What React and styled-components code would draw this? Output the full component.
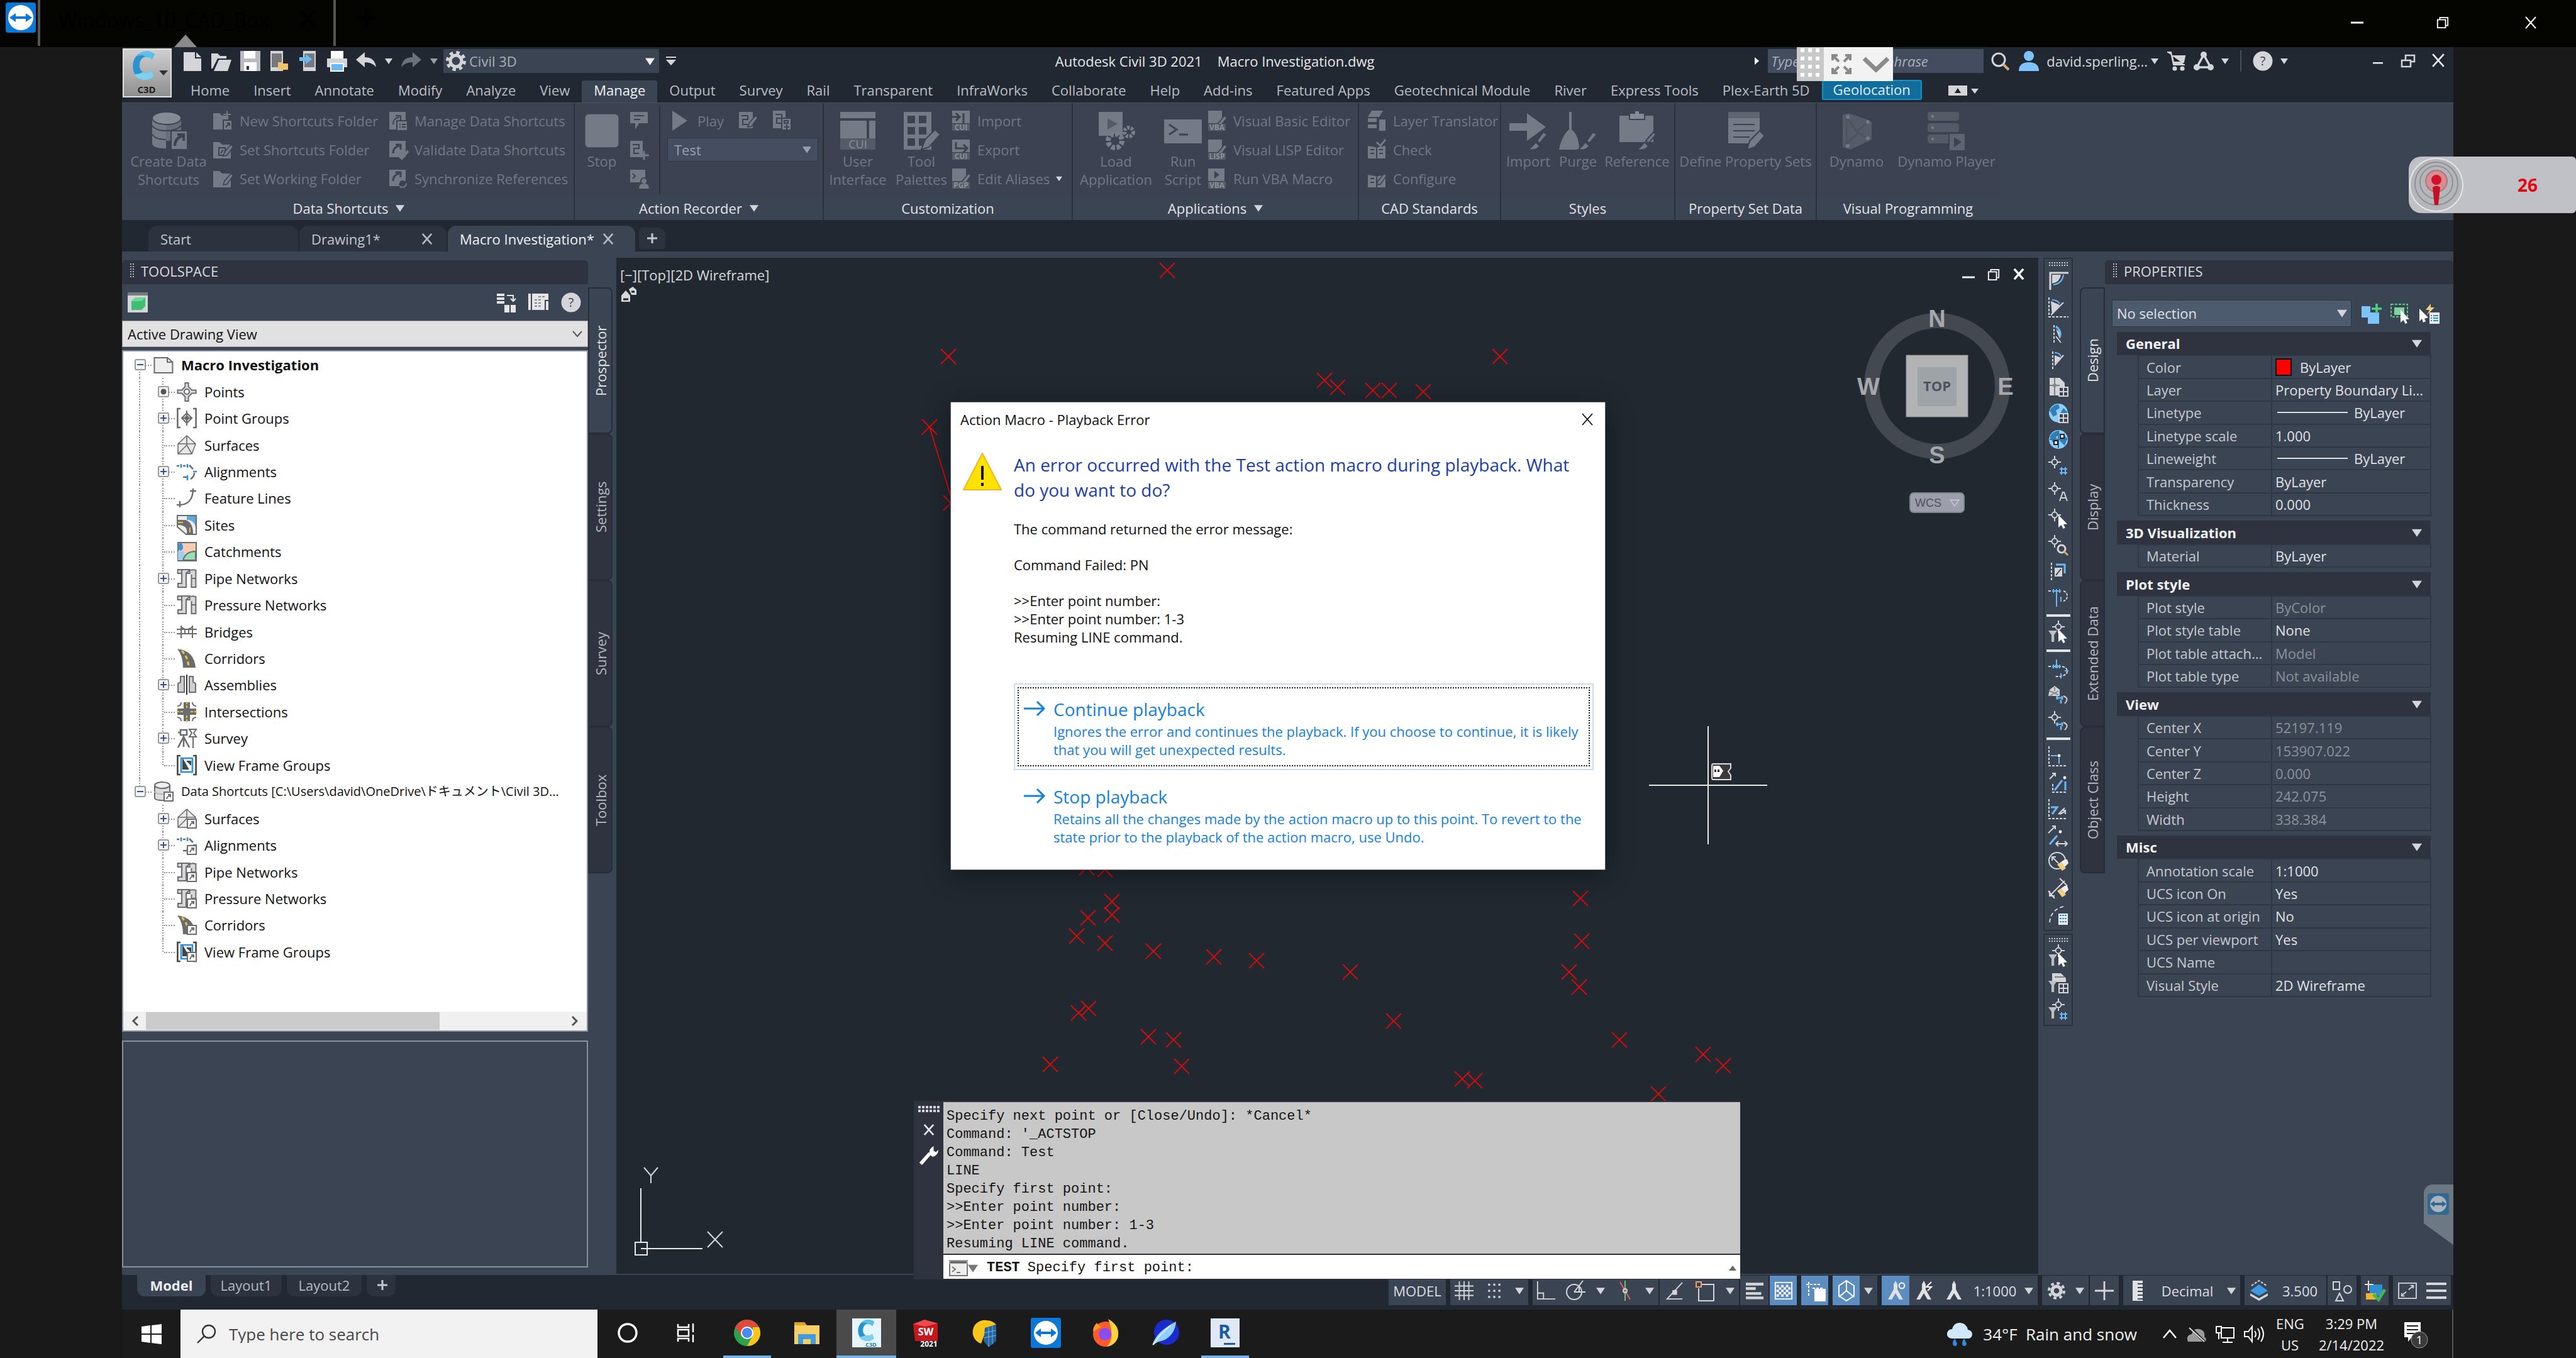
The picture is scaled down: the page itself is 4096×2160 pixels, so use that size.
import React from 'react';
import styled, { createGlobalStyle } from 'styled-components';

const GlobalStyle = createGlobalStyle`
    *{ box-sizing:border-box; }
    body{
        margin:0;
        background:#191919;
        color:#d6d8dc;
        font-family:"Open Sans", "Noto Sans", "Noto Sans CJK JP", sans-serif;
        font-size:22px;
        line-height:28px;
    }
    button, input, select{
        font:inherit;
        color:inherit;
        margin:0;
        padding:0;
        border:0;
        background:none;
        border-radius:0;
    }
    select{ appearance:none; }
    a{ color:inherit; text-decoration:none; }
    svg{ display:block; flex:none; overflow:visible; }
    p, h2{ margin:0; font-weight:400; }
`;

const G = '#d4d5d8';
const B = '#6cb8f4';
const K = '#6a6c70';
const D = '#747a86';
const D2 = '#3c4252';

/* ---------- page shell ---------- */

const Page = styled.div`
    position:relative;
    min-height:100vh;
    display:flex;
    flex-direction:column;
    overflow:hidden;
`;
const Shell = styled.div`
    flex:1;
    margin:0 195px 0 194px;
    display:flex;
    flex-direction:column;
    background:#3b4453;
`;
const RemoteBar = styled.header`
    height:75px;
    background:#040500;
    display:flex;
    align-items:flex-start;
    padding-left:9px;
    > svg{ margin-top:4px; }
`;
const RemoteTab = styled.div`
    position:relative;
    width:474px;
    height:73px;
    margin-left:3px;
    padding:14px 28px 0 29px;
    border:solid #55564f;
    border-width:0 4px;
    display:flex;
    justify-content:space-between;
    align-items:flex-start;
    font-size:32px;
    line-height:36px;
    color:#000;
    &::after{
        content:"";
        position:absolute;
        left:213px;
        bottom:-2px;
        border:solid transparent;
        border-width:0 18px 20px;
        border-bottom-color:#8a8a8a;
    }
`;
const RemoteAdd = styled.button`
    margin:13px 0 0 34px;
`;
const RemoteWin = styled.div`
    margin-left:auto;
    height:72px;
    display:flex;
    button{
        width:136px;
        display:flex;
        justify-content:center;
        align-items:center;
    }
    button:last-child{ width:144px; }
`;

/* ---------- title bar and menu ---------- */

const AppHeader = styled.div`
    height:88px;
    background:#222831;
    display:flex;
`;
const AppButton = styled.button`
    width:78px;
    height:78px;
    margin:2px 0 0 1px;
    border:2px solid #e0e0e0;
    background:linear-gradient(#d0d0d0, #8e8e8e);
`;
const HeaderRows = styled.div`
    flex:1;
    display:flex;
    flex-direction:column;
`;
const QuickRow = styled.div`
    height:44px;
    display:flex;
    align-items:center;
`;
const QuickIcons = styled.div`
    display:flex;
    align-items:center;
    gap:14px;
    padding:0 9px 0 17px;
`;
const IconButton = styled.button`
    display:flex;
    align-items:center;
    justify-content:center;
    width:${props => props.$w ? props.$w + 'px' : 'auto'};
    height:${props => props.$h ? props.$h + 'px' : 'auto'};
`;
const Workspace = styled.label`
    width:343px;
    height:38px;
    padding:0 7px 0 4px;
    background:#3b4453;
    display:flex;
    align-items:center;
    gap:5px;
    color:#a9aeb8;
    select{ flex:1; }
`;
const Title = styled.div`
    flex:1;
    padding-right:10px;
    text-align:center;
    color:#e6e7e9;
    span{ margin:0 12px; }
`;
const Account = styled.div`
    display:flex;
    align-items:center;
    gap:12px;
`;
const UserName = styled.span`
    margin-right:-7px;
`;
const SearchInput = styled.input`
    width:343px;
    height:38px;
    padding:0 5px;
    background:#444c5f;
    font-style:italic;
    &::placeholder{ color:#a9aeb8; opacity:1; }
`;
const Divider = styled.div`
    width:2px;
    height:34px;
    margin:0 6px;
    background:#464d59;
`;
const WinControls = styled.div`
    display:flex;
    margin-left:119px;
    button{
        width:48px;
        display:flex;
        justify-content:center;
    }
`;
const MenuRow = styled.nav`
    height:44px;
    padding-left:11px;
    display:flex;
    align-items:flex-end;
`;
const MenuTab = styled.a`
    height:35px;
    padding:0 19px;
    line-height:30px;
    color:${props => props.$on ? '#f0f1f3' : '#b9bdc4'};
    background:${props => props.$on ? '#3b4453' : 'none'};
    border-radius:4px 4px 0 0;
`;
const GeoTab = styled.a`
    height:32px;
    margin:0 42px 4px 0;
    padding:0 16px;
    line-height:26px;
    color:#e2eef6;
    background:#116d9c;
    border:2px solid #1590c8;
    border-radius:3px;
`;

/* ---------- ribbon ---------- */

const Ribbon = styled.div`
    display:flex;
    height:187px;
    padding-left:3px;
    background:#3b4453;
    border-top:1px solid #4a5260;
`;
const Panel = styled.section`
    width:${props => props.$w}px;
    border-right:2px solid #2a313c;
    display:flex;
    flex-direction:column;
    &:last-child{ border-right:0; }
`;
const PanelBody = styled.div`
    height:148px;
    padding-top:5px;
    display:flex;
    background:#3d4252;
    color:#717784;
`;
const PanelLabel = styled.button`
    flex:1;
    display:flex;
    align-items:center;
    justify-content:center;
    gap:12px;
    color:#e2e3e6;
`;
const BigButton = styled.button`
    width:${props => props.$w}px;
    padding-top:7px;
    display:flex;
    flex-direction:column;
    align-items:center;
    justify-content:flex-start;
    line-height:29px;
    white-space:pre-line;
    text-align:center;
    svg{ margin-bottom:2px; }
`;
const SmallCol = styled.div`
    width:${props => props.$w ? props.$w + 'px' : 'auto'};
    display:flex;
    flex-direction:column;
`;
const SmallButton = styled.button`
    height:46px;
    display:flex;
    align-items:center;
    gap:10px;
    white-space:nowrap;
`;
const PlayCol = styled.div`
    margin:0 0 3px 16px;
    padding-left:11px;
    border-left:2px solid #2a313c;
`;
const PlayRow = styled.div`
    height:46px;
    display:flex;
    align-items:center;
    gap:22px;
    padding-left:6px;
`;
const MacroSelect = styled.label`
    display:flex;
    align-items:center;
    width:240px;
    height:38px;
    margin-top:4px;
    padding:0 10px;
    background:#454d60;
    border:1px solid #2f3643;
    color:#9aa0ac;
    select{ flex:1; }
`;

/* ---------- document tabs ---------- */

const DocTabs = styled.div`
    height:52px;
    padding:9px 0 0 42px;
    display:flex;
    gap:2px;
    background:#222831;
    border-bottom:2px solid #3b4453;
`;
const DocTab = styled.button`
    width:${props => props.$w}px;
    padding:0 ${props => props.$on ? 34 : 22}px 0 19px;
    display:flex;
    align-items:center;
    justify-content:space-between;
    background:${props => props.$on ? '#3b4453' : '#2c333f'};
    color:${props => props.$on ? '#f0f1f3' : '#c3c6cc'};
    border-radius:14px 14px 0 0;
    white-space:nowrap;
`;
const NewDocTab = styled.button`
    width:42px;
    margin:3px 0 4px 4px;
    display:flex;
    align-items:center;
    justify-content:center;
    background:#2c333f;
    border-radius:6px 12px 6px 6px;
`;

/* ---------- work area ---------- */

const Work = styled.main`
    position:relative;
    flex:1;
    display:flex;
    padding-top:8px;
`;
const Toolspace = styled.section`
    width:741px;
    padding-top:4px;
    display:flex;
    flex-direction:column;
`;
const PaletteTitle = styled.div`
    height:38px;
    padding:0 0 5px 12px;
    display:flex;
    align-items:center;
    gap:10px;
    background:#2e333f;
    border-radius:6px 6px 0 0;
    color:#d9dbdf;
`;
const PaletteTools = styled.div`
    height:58px;
    padding:0 11px 0 9px;
    display:flex;
    align-items:center;
    gap:20px;
    button:first-child{ margin-right:auto; }
`;
const ViewSelect = styled.label`
    height:42px;
    padding:0 8px;
    display:flex;
    align-items:center;
    background:#e1e1e1;
    border:1px solid #9a9ea6;
    color:#111;
    select{ flex:1; }
`;
const Tree = styled.div`
    height:1084px;
    margin-top:5px;
    display:flex;
    flex-direction:column;
    background:#fff;
    border:2px solid #8b919c;
    color:#111;
`;
const TreeRows = styled.div`
    flex:1;
    padding:0 0 74px 8px;
    display:flex;
    flex-direction:column;
`;
const TreeRow = styled.div`
    flex:1;
    display:flex;
    align-items:center;
    font-size:${props => props.$long ? 20 : 22}px;
    font-weight:${props => props.$bold ? 700 : 400};
    white-space:nowrap;
    > svg{ margin:0 12px 0 3px; }
`;
const Guide = styled.div`
    position:relative;
    flex:none;
    align-self:stretch;
    width:37px;
    display:flex;
    align-items:center;
    justify-content:center;
    &::before{
        content:"";
        display:${props => props.$line ? 'block' : 'none'};
        position:absolute;
        left:17px;
        top:${props => props.$line === 'start' ? '50%' : 0};
        bottom:${props => props.$line === 'end' ? '50%' : 0};
        border-left:2px dotted #999;
    }
    &::after{
        content:"";
        display:${props => props.$stub ? 'block' : 'none'};
        position:absolute;
        left:20px;
        right:0;
        top:50%;
        border-top:2px dotted #999;
    }
`;
const Toggle = styled.button`
    position:relative;
    z-index:1;
    width:18px;
    height:18px;
    background:#f6f6f6;
    border:2px solid #9a9a9a;
    border-radius:3px;
    svg{ margin:auto; }
`;
const TreeScroll = styled.div`
    height:30px;
    padding:0 11px;
    display:flex;
    align-items:center;
    gap:9px;
    background:#f0f0f0;
    div{
        width:467px;
        height:28px;
        background:#cbcbcb;
    }
    button:last-child{ margin-left:auto; }
`;
const Preview = styled.div`
    flex:1;
    margin:14px 0 10px;
    border:2px solid #8b919c;
`;
const SideTabs = styled.div`
    width:${props => props.$right ? 40 : 39}px;
    margin:47px ${props => props.$right ? 0 : 6}px 0 ${props => props.$right ? 11 : 0}px;
    display:flex;
    flex-direction:column;
`;
const SideTab = styled.button`
    height:233px;
    writing-mode:vertical-rl;
    transform:rotate(180deg);
    line-height:30px;
    text-align:center;
    color:${props => props.$on ? '#e0e2e6' : '#b4b8c0'};
    background:${props => props.$on ? '#3b4453' : '#2e333f'};
    border:2px solid #272d38;
    border-radius:${props => props.$right ? '0 8px 8px 0' : '8px 0 0 8px'};
`;
const Canvas = styled.section`
    position:relative;
    flex:1;
    background:#212830;
    > svg{ position:absolute; inset:0; width:100%; height:100%; }
`;
const CanvasTop = styled.div`
    position:relative;
    height:54px;
    padding:0 11px 0 6px;
    display:flex;
    justify-content:space-between;
    align-items:center;
    color:#d6d8dc;
    div{ display:flex; }
    div button{ width:40px; display:flex; justify-content:center; }
`;
const ViewCube = styled.div`
    position:absolute;
    top:80px;
    right:30px;
    width:262px;
    display:flex;
    flex-direction:column;
    align-items:center;
`;
const WcsButton = styled.button`
    width:88px;
    height:33px;
    margin-top:33px;
    display:flex;
    align-items:center;
    justify-content:space-around;
    font-family:"Liberation Sans", sans-serif;
    font-size:18px;
    color:#4d505c;
    background:#9c9eac;
    border:2px solid #7f828f;
    border-radius:7px;
`;
const ToolStrips = styled.div`
    width:47px;
    margin-left:8px;
    display:flex;
    flex-direction:column;
    gap:4px;
`;
const Strip = styled.div`
    padding:4px 0 3px;
    display:flex;
    flex-direction:column;
    align-items:center;
    border:2px solid #2a313c;
    > svg{ margin-bottom:2px; }
    button{ height:42px; display:flex; align-items:center; }
    hr{
        width:38px;
        height:4px;
        margin:5px 0;
        border:0;
        background:#e3e3e3;
    }
`;
const Properties = styled.section`
    flex:0 0 554px;
    padding-top:4px;
`;
const PropTop = styled.div`
    display:flex;
    align-items:center;
    gap:14px;
    padding:25px 0 8px 11px;
`;
const SelectionBox = styled.label`
    width:381px;
    height:43px;
    margin-right:2px;
    padding:0 6px 2px 7px;
    display:flex;
    align-items:center;
    background:#4d5b6f;
    border:1px solid #2f3643;
    color:#e0e2e6;
    select{ flex:1; }
`;
const PropTable = styled.table`
    width:500px;
    height:1058px;
    margin-left:19px;
    border-collapse:collapse;
    table-layout:fixed;
    th{
        height:37px;
        padding:0 14px;
        text-align:left;
        color:#f2f3f5;
        background:#2e333f;
    }
    th div{ display:flex; justify-content:space-between; align-items:center; }
    td{
        height:36px;
        padding:0 0 0 5px;
        line-height:28px;
        border:2px solid #2f3744;
        white-space:nowrap;
        overflow:hidden;
    }
    td:first-child{ border:0; }
    td:nth-child(2){ padding-left:12px; color:#c6c9cf; }
    .gap td{ height:8px; border:0; }
`;
const Col = styled.col`
    width:${props => props.$w}px;
`;
const Value = styled.td`
    color:${props => props.$dim ? '#8b919b' : '#e0e2e6'};
    div{ display:flex; align-items:center; gap:${props => props.$swatch ? 13 : 10}px; }
`;
const Swatch = styled.span`
    width:26px;
    height:28px;
    background:#fe0000;
    border:2px solid #101010;
`;
const Stroke = styled.span`
    width:112px;
    height:2px;
    margin-left:3px;
    background:#d9dbdf;
`;

/* ---------- command line ---------- */

const CommandWindow = styled.div`
    position:absolute;
    left:1259px;
    bottom:-9px;
    width:1314px;
    display:flex;
    background:#2e333f;
    z-index:1;
`;
const CommandGrip = styled.div`
    width:47px;
    padding-top:8px;
    display:flex;
    flex-direction:column;
    align-items:center;
    gap:17px;
`;
const CommandMain = styled.div`
    flex:1;
    margin:2px 0 1px;
    font-family:"Liberation Mono", "DejaVu Sans Mono", monospace;
    color:#151515;
`;
const History = styled.div`
    height:241px;
    padding:8px 5px 0;
    background:#c8c8c8;
    line-height:29px;
    white-space:pre;
`;
const CommandInput = styled.label`
    height:38px;
    margin-top:2px;
    padding:3px 6px 0 9px;
    display:flex;
    align-items:center;
    background:#fff;
    b{ margin:0 12px 0 14px; }
    input{ flex:1; }
`;

/* ---------- bottom bars ---------- */

const StatusRow = styled.div`
    height:57px;
    padding:0 4px 0 24px;
    display:flex;
    background:#222831;
    border-top:2px solid #3b4453;
`;
const LayoutTab = styled.button`
    height:34px;
    width:${props => props.$w}px;
    margin-right:8px;
    padding-bottom:3px;
    font-weight:${props => props.$on ? 700 : 400};
    color:${props => props.$on ? '#eceef0' : '#b4b8c0'};
    background:${props => props.$on ? '#3b4453' : '#2c333f'};
    border-radius:0 0 12px 12px;
`;
const StatusTools = styled.div`
    margin-left:auto;
    display:flex;
    align-items:flex-start;
    padding-top:1px;
`;
const StatusGroup = styled.div`
    display:flex;
    height:47px;
    margin-left:${props => props.$tight ? 2 : 7}px;
    background:#3b4453;
`;
const StatusItem = styled.button`
    width:${props => props.$w}px;
    height:47px;
    display:flex;
    align-items:center;
    justify-content:center;
    white-space:nowrap;
    color:#dcdee2;
    background:${props => props.$on ? '#5c8dc0' : 'none'};
`;
const Taskbar = styled.footer`
    height:77px;
    margin:0 195px 0 194px;
    display:flex;
    background:#1b1b1b;
    border-right:2px solid #555;
    color:#f0f0f0;
`;
const StartButton = styled.button`
    width:93px;
    display:flex;
    align-items:center;
    justify-content:center;
`;
const TaskSearch = styled.label`
    width:663px;
    padding-left:25px;
    display:flex;
    align-items:center;
    gap:20px;
    background:#f2f2f2;
    input{ flex:1; font-size:26px; }
    input::placeholder{ color:#484848; opacity:1; }
`;
const TaskItem = styled.button`
    width:95px;
    display:flex;
    flex-direction:column;
    align-items:center;
    justify-content:space-between;
    padding-top:13px;
    background:${props => props.$on ? '#4a4a4a' : 'none'};
    &::after{
        content:"";
        width:${props => props.$on ? '100%' : '76px'};
        height:4px;
        background:${props => props.$open ? '#74b4e8' : 'none'};
    }
`;
const Tray = styled.div`
    margin-left:auto;
    padding-right:38px;
    display:flex;
    align-items:center;
`;
const Weather = styled.span`
    margin:0 34px 0 16px;
    font-size:26px;
    line-height:36px;
    white-space:pre;
`;
const TrayIcons = styled.div`
    display:flex;
    gap:13px;
    margin-right:20px;
`;
const TrayText = styled.div`
    width:${props => props.$w}px;
    line-height:34px;
    text-align:center;
`;

/* ---------- floating windows ---------- */

const RemotePanel = styled.div`
    position:absolute;
    top:75px;
    right:1086px;
    height:54px;
    display:flex;
    background:#f2f2f2;
    button{ width:55px; display:flex; align-items:center; justify-content:center; }
`;
const Recorder = styled.div`
    position:absolute;
    top:249px;
    right:0;
    width:266px;
    height:90px;
    padding-right:61px;
    display:flex;
    align-items:center;
    justify-content:space-between;
    background:#c0c1c6;
    border-radius:20px 6px 6px 20px;
    color:#e30613;
    font-size:28px;
    font-weight:700;
`;
const RemoteDock = styled.button`
    position:absolute;
    top:1884px;
    right:195px;
`;
const Dialog = styled.div`
    position:absolute;
    left:1511px;
    top:639px;
    width:1042px;
    min-height:745px;
    padding:13px 18px 18px 15px;
    background:#fff;
    border:1px solid #5a5d62;
    box-shadow:0 8px 40px rgba(0,0,0,.4);
    color:#111;
    z-index:2;
`;
const DialogTitle = styled.div`
    display:flex;
    justify-content:space-between;
    align-items:center;
    margin-bottom:38px;
`;
const DialogHead = styled.div`
    display:flex;
    gap:19px;
    padding-left:4px;
    h2{
        font-size:28px;
        line-height:40px;
        color:#1c3fa6;
    }
`;
const DialogBody = styled.div`
    padding-left:85px;
`;
const Message = styled.p`
    padding-top:28px;
    line-height:29px;
    white-space:pre-line;
`;
const Choice = styled.button`
    display:flex;
    align-items:flex-start;
    width:100%;
    min-height:138px;
    margin-top:${props => props.$focus ? 59 : 1}px;
    padding:4px;
    border:2px solid ${props => props.$focus ? '#c5e0f5' : 'transparent'};
    text-align:left;
    color:#1681da;
    > span{
        flex:1;
        display:flex;
        gap:12px;
        min-height:126px;
        padding:12px 0 0 7px;
        border:2px dotted ${props => props.$focus ? '#222' : 'transparent'};
    }
    b{ display:block; font-weight:400; font-size:28px; line-height:42px; }
    small{ display:block; font-size:22px; line-height:29px; }
`;

/* ---------- icons ---------- */

const Svg = ({ s = 32, h, vb = '0 0 16 16', c = 'none', st = G, children }) => (
    <svg width={s} height={h || s} viewBox={vb} fill={c} stroke={st} strokeWidth="1" aria-hidden="true">{children}</svg>
);
const Down = ({ c = G, s = 12 }) => <Svg s={s} vb="0 0 12 12" st="none" c={c}><path d="M0 2h12l-6 9z" /></Svg>;
const Cross = ({ s = 20, c = '#e8e8e8', w = 1.5 }) => <Svg s={s} vb="0 0 20 20"><path d="M2 1l16 18M18 1L2 19" stroke={c} strokeWidth={w} /></Svg>;

// parts shared by several of the 16 px drawings
const Pt = ({ c = G }) => <><circle cx="5" cy="5" r="2.2" stroke={c} /><path d="M5 0v3M5 7v3M0 5h3M7 5h3" stroke={c} /></>;
const Cursor = () => <path d="M8 5v10l2.3-2 1.5 3 1.6-.8-1.4-2.7 3-.3z" fill="#fff" stroke="none" />;
const Funnel = () => <path d="M0 6h7L4.600 9.500V15H2.500V9.500z" fill="#bdbfc3" stroke="none" />;
const Sheet = () => <path d="M8.500 8.500h7v7h-7zM8.500 12h7M12 8.500v7" fill="#3b4453" stroke={G} />;
const Link = () => <><rect x="8.500" y="8.500" width="7" height="7" fill="#fff" stroke={K} /><path d="M10.500 14c.5-2 1-2.500 2.500-2.500M11.500 10.500h2v2" stroke={K} /></>;
const Brush = () => <><path d="M7 10l4 5 3-2-4-5z" fill="#f5cf7a" stroke="none" /><path d="M10 8l3 4 3-3-1-3-2 0z" fill="#eee" stroke="none" /></>;
const Globe = () => <><circle cx="8" cy="8" r="7.500" fill="#8fcdf6" stroke="none" /><path d="M1 6q3-5 7-5l1 3-3 2 1 3-3 2zM9 9l3-5 3 3-2 6z" fill="#2f7fb8" stroke="none" /></>;

const stripIcons = [
    <><path d="M1.500 15V1.500H16" strokeWidth="1.500" /><path d="M3 3h7q-1 6-7 7z" fill={G} stroke="none" /><path d="M12 3q-1 7-8 8" stroke={B} /></>,
    <><path d="M.5 0v15.500H16" strokeDasharray="2 1" /><path d="M2 3l7 3-6 8z" fill={G} stroke="none" /><path d="M2 14L12 4" /><path d="M3 2q4 0 6 3" stroke={B} /></>,
    <><path d="M4.500 1v15" strokeDasharray="2 1" /><path d="M6 4l3 8 1-4z" fill={G} stroke="none" /><path d="M6 2q5 4 3 9" stroke={B} strokeWidth="1.500" /><path d="M6 10l4 5" /></>,
    <><path d="M3.500 1v15" strokeDasharray="2 1" /><path d="M5 4l5 2-5 5z" fill={G} stroke="none" /><path d="M5 12l7-8" /><path d="M5 2q4 0 5 3" stroke={B} /></>,
    <><path d="M1 1h8l4 4v3H8v7H1z" fill={G} stroke="none" /><path d="M5 1v14M1 7h8" stroke="#7b808a" /><circle cx="5" cy="7" r="1.500" fill="#888" stroke="none" /><Sheet /></>,
    <><Globe /><Sheet /></>,
    <><Globe /><path d="M1 8h14M8 1v14" stroke="#2c74a8" /><path d="M4.500 9h3v3h-3zM9.500 4h3v3h-3z" fill="#eee" stroke="#222" /></>,
    <><Pt /><path d="M10.500 9v6M13.500 9v6M9 10.500h6M9 13.500h6" stroke={B} /></>,
    <><Pt /><path d="M9 15l2.500-7h1l2.500 7M10 12.500h4" /></>,
    <><Pt /><Cursor /></>,
    <><Pt /><circle cx="10.500" cy="11" r="3" strokeWidth="1.500" /><path d="M12.500 13l3 3" stroke="#d9a678" strokeWidth="1.500" /></>,
    <><path d="M2.500 1v15" strokeDasharray="2 1" /><path d="M5 5h6v7H5z" fill={G} stroke="none" /><path d="M6 11l4-5" stroke="#3b4453" /><path d="M6 2.500h7v7" stroke={B} strokeWidth="1.500" /></>,
    <><path d="M0 2.500h2M12 2.500q3 1 3 4t-3 4" strokeDasharray="2 1" /><path d="M3 2.500h7M6.500 1v14M10 7v4M4 1v3M9 1v3" stroke={B} /></>,
    null,
    <><g transform="translate(3 -2)"><Pt /></g><Funnel /><Cursor /></>,
    null,
    <><path d="M0 6.500h2M11 6.500q4 1 4 4t-6 4H5" strokeDasharray="2 1" /><path d="M3 6.500h7M6.500 1v6M10 12v4M4 5v3M9 5v3M13 10h3" stroke={B} /><circle cx="6.500" cy="6.500" r="1.500" fill={B} stroke="none" /></>,
    <><path d="M0 9L1 4l4-3 4 3v5z" fill={G} stroke="none" /><path d="M1 5l7 3M8 5L1 9M5 2v3" stroke="#888" /><path d="M6 10.500h5M7 9v3M11 9v3M10 15v-3" stroke={B} strokeWidth="1.300" /><path d="M12 9q5 2 1 6" /></>,
    <><Pt /><path d="M6 10.500h5M7 9v3M11 9v3M10 15v-3" stroke={B} strokeWidth="1.300" /><path d="M12 9q5 2 1 6" /></>,
    null,
    <><path d="M.5 0v15.500H15" strokeDasharray="2 1" /><path d="M2 7.500h5M8.500 9v5" stroke={B} /><circle cx="8.500" cy="7.500" r="1.200" fill="#fff" stroke="none" /></>,
    <><path d="M3.500 9v6.500H15" strokeDasharray="2 1" /><path d="M1 5l4-4M3 .5h2.500V3" /><path d="M5 14l6-8M13.500 7v7" stroke={B} strokeWidth="1.500" /><circle cx="13" cy="4" r="1.200" fill="#fff" stroke="none" /></>,
    <><path d="M.5 0v15.500H15" strokeDasharray="2 1" /><path d="M2 6.500h5L3 12" stroke={B} strokeWidth="1.500" /><path d="M8 12l5-5M9 12l4-2M11 9h2.500v3" /></>,
    <><path d="M0 6l5-5M3 .5h2.500V3M6 14.500h9M8 12.500l-2 2 2 2M13 12.500l2 2-2 2" /><path d="M1 15l6-7" stroke={B} strokeWidth="1.500" /><circle cx="9.500" cy="5" r="1.200" fill="#fff" stroke="none" /></>,
    <><circle cx="7" cy="7" r="6.500" /><path d="M3 4l5 5M3 7V4h3" /><Brush /></>,
    <><path d="M1 14L13 2M9 0l6 6M0 10l5 6M1 10v4h4" /><Brush /></>,
    <><path d="M1 14q1-11 13-13" strokeDasharray="3 2" /><path d="M8 7h7.500v9H8z" fill="#eee" stroke="none" /><path d="M9 8.500h5.500M9 11h5.500M9 13.500h5.500" stroke="#2f8fe0" strokeDasharray="1.500 .5" /></>,
];
const strip2Icons = [
    <><g transform="translate(3 -2)"><Pt /></g><Funnel /><Cursor /></>,
    <><path d="M3 0h7l4 4v3H3z" fill={G} stroke="none" /><path d="M5 3h8" stroke="#7b808a" /><Funnel /><Sheet /></>,
    <><g transform="translate(3 -1)"><Pt /></g><Funnel /><path d="M10.500 10v6M13.500 10v6M9 11.500h6M9 14.500h6" stroke={B} /></>,
];

const treeIcons = {
    page: <path d="M.7 2.500h10.500l4 3.500v8.500H.7zM11 2.500V6h4" fill="#efefef" stroke={K} />,
    points: <><path d="M6.700 1h2.600v3L12 6.700h3.300v2.600H12L9.300 12v3.500H6.700V12L4 9.300H.7V6.700H4L6.700 4z" fill="#ddd" stroke={K} /><circle cx="8" cy="8" r="2" fill="#fff" stroke={K} /></>,
    groups: <><path d="M3 .5H.7v15H3M13 .5h2.300v15H13" stroke={K} strokeWidth="1.300" /><path d="M8 2v12M3.500 8h9M8 4l4 4-4 4-4-4z" fill="#e6e6e6" stroke={K} /><circle cx="8" cy="8" r="1.200" stroke={K} /></>,
    surfaces: <path d="M1 15V7l7-6.500L15 7l-3 8zM1 7h14M8 .5L8 8 1 15M8 8l4 7" fill="#e9e9e9" stroke={K} strokeWidth=".8" />,
    align: <><path d="M0 3.500h2M5 3.500h2M10 3l3 3M14 9q0 3-3 5M5 12.500h3" stroke={K} strokeWidth="1.300" /><path d="M3.500 2v3M8.500 2v3M13 8h3M8.500 11v4" stroke="#2f8fe0" strokeWidth="1.300" /></>,
    feature: <path d="M2.500 10.500v5M0 13.500q13 1 13-13M10.500 2.500h5" stroke={K} strokeWidth="1.200" />,
    sites: <><path d="M.5.5h15v15h-8l-7-6z" fill="#eee" stroke={K} /><path d="M8 1h7v9q-1-6-7-6z" fill="#5fa9dc" stroke="none" /><path d="M1 4h6q6 2 6 11H8Q9 8 1 8z" fill={K} stroke="none" /><path d="M1 6h4M10.500 10v4" stroke="#f0c040" /></>,
    catch: <><path d="M1 1h14.500v14.500H1z" fill="#f6cdb2" stroke={K} /><path d="M1 8l5 0v7H1z" fill="#9bd1f2" stroke="none" /><path d="M5 15q2-7 10-7v7z" fill="#98e0b4" stroke={K} /><path d="M3 0Q-1 6 3 7.500 7 6 3 0z" fill="#3d93d4" stroke="none" /></>,
    pipe: <path d="M.8 1h9.500v3H7.500v11H1v-3h3V4H.8zM4 1v11M7.500 4q3-4 7.700-2.500V15h-3.500V5M11.500 8h4" fill="#d6d6d6" stroke={K} />,
    bridge: <path d="M0 6h16M0 9.500h16M3.500 3v10M12.500 3v10M3.500 4q4 4 9 0M6.500 6v4M9.500 6v4" stroke={K} />,
    corridor: <><path d="M.5.500Q14 2 15 15.500H5Q5 6 .5.500z" fill={K} stroke="none" /><path d="M4 2q5 5 5.500 13" stroke="#f3c433" strokeWidth="1.500" strokeDasharray="3 2" /></>,
    assembly: <><path d="M1 14V7l2-1V1.500h3V14zM15 14V7l-2-1V1.500h-3V14z" fill="#cfcfcf" stroke={K} /><path d="M8 0v16" stroke="#333" /></>,
    inter: <><path d="M5.500.5h5v5h5v5h-5v5h-5v-5h-5v-5h5z" fill={K} stroke="none" /><path d="M8 0v5M8 11v5M0 8h5M11 8h5" stroke="#f3c433" strokeDasharray="2 1" /><path d="M.5 3.500q3 0 3-3M15.500 3.500q-3 0-3-3M.5 12.500q3 0 3 3M15.500 12.500q-3 0-3 3" stroke={K} /></>,
    survey: <><path d="M3 1.500h5v4H3zM1 3.500h2M5.500 6v9M5.500 7L1 15.500M5.500 7l4.500 8.500" stroke={K} strokeWidth="1.300" /><path d="M10 1h5.500l-2 3 2 3H10l2-3zM13 7v9" stroke={K} /></>,
    frame: <><path d="M3 .5H.7v15H3M13 .5h2.300v15H13" stroke="#444" strokeWidth="1.300" /><path d="M3.500 2.500h9v11h-9z" fill="#eaf4fc" stroke="#2f8fe0" strokeWidth="1.300" /><path d="M5 4v7h4zM8 5h3v3" fill="#444" stroke="#444" /></>,
    db: <><path d="M1 3v10q0 2 6 2t6-2V3" fill="#ddd" stroke={K} /><ellipse cx="7" cy="3" rx="6" ry="2.500" fill="#eee" stroke={K} /><path d="M1 8q1 2 6 2t6-2" stroke="#bbb" /></>,
};
const TreeIcon = ({ name, link }) => <Svg st={K}>{treeIcons[name]}{link && <Link />}</Svg>;

const gear = '#787e8a';
const rib = {
    db: <><path d="M3 6v20q0 4 11 4V6z" fill={D} stroke="none" /><path d="M14 4h12v20H14z" fill="#676d7a" stroke="none" /><ellipse cx="14.500" cy="6" rx="11.500" ry="5" fill="#858b95" stroke={D2} /><path d="M3 12q3 4 11 4t12-4M3 19q3 4 11 4" stroke={D2} /><path d="M18 16h13v15H18z" fill={D} stroke={D2} /><path d="M21 28q0-6 6-8M23 19h5v5" stroke={D2} strokeWidth="2" /></>,
    stop: <rect x="2" y="2" width="28" height="28" rx="3" fill={D} stroke="none" />,
    cui: <><path d="M2 1h28v5H2zM2 8h21v14H2zM25 8h5v14h-5z" fill={D} stroke="none" /><path d="M2 22h28v9H2z" fill="#555b66" stroke="none" /><text x="16" y="30" textAnchor="middle" fontSize="9" fill="#8b909a" stroke="none">CUI</text></>,
    tool: <><path d="M2 1h22v30H2z" fill={D} stroke="none" /><path d="M5 4h6v6H5zM14 4h6v6h-6zM5 13h6v6H5zM14 13h6v6h-6zM5 22h6v6H5zM14 22h6v6h-6z" fill={D2} stroke="none" /><path d="M16 31l3-8 8-8 4 4-9 10z" fill={D} stroke={D2} /></>,
    load: <><path d="M2 1h19v19H2z" fill={D} stroke="none" /><path d="M9 6v9l8-4.500z" fill="#555b66" stroke="none" /><circle cx="15" cy="24" r="5.500" stroke={gear} strokeWidth="4" strokeDasharray="3 1.300" fill={D2} /><circle cx="26" cy="17" r="3.500" stroke={gear} strokeWidth="3" strokeDasharray="2 1" fill={D2} /></>,
    run: <><path d="M1 7h30v19H1z" fill={D} stroke="none" /><path d="M5 11l6 4-6 4M13 19h7" stroke={D2} strokeWidth="1.500" /></>,
    imp: <><path d="M1 10h14V2l15 11-15 11v-8H1z" fill={D} stroke="none" /><path d="M28 17l3 2-6 7-2-2zM22 25l3 3q-2 4-9 3 3-2 6-6z" fill={D} stroke={D2} /></>,
    purge: <><path d="M9 1h2v14q6 5 6 16H1Q3 20 9 15z" fill={D} stroke="none" /><path d="M28 17l3 2-6 7-2-2zM22 25l3 3q-2 4-9 3 3-2 6-6z" fill={D} stroke={D2} /></>,
    ref: <><path d="M2 4h27v21H2z" fill={D} stroke="none" /><path d="M10 2h4V0h4v2h4v5H10z" fill="#858b95" stroke={D2} /><path d="M29 17l2 2-6 7-2-2zM22 25l3 3q-2 4-9 3 3-2 6-6z" fill={D} stroke={D2} /></>,
    prop: <><path d="M2 1h25v5H2z" fill="#5e6470" stroke="none" /><path d="M2 6h25v20H2z" fill={D} stroke="none" /><path d="M6 11h17M6 16h17M6 21h13" stroke={D2} /><path d="M17 31l2-7 8-8 4 4-8 9z" fill={D} stroke={D2} /></>,
    dyn: <><path d="M5 3l5-1 14 5 4 2v14l-4 2-13 6-6-2z" fill="#555c68" stroke="none" /><path d="M8 5v22l9-9zM8 5l8 11M25 9l-9 8M25 22l-8-5" stroke="#4a505c" /><circle cx="9" cy="5" r="1.500" fill={D} stroke="none" /><circle cx="25" cy="9" r="1.500" fill={D} stroke="none" /><circle cx="25" cy="22" r="1.500" fill={D} stroke="none" /><circle cx="9" cy="28" r="1.500" fill={D} stroke="none" /></>,
    play: <><rect x="1" y="1" width="25" height="7" rx="2" fill="#545b67" stroke="none" /><rect x="1" y="10" width="25" height="7" rx="2" fill="#545b67" stroke="none" /><rect x="1" y="19" width="25" height="7" rx="2" fill="#545b67" stroke="none" /><path d="M4 4.500h2M4 13.500h2M4 22.500h2" stroke={D} strokeWidth="2" /><path d="M18 18h13v14H18z" fill="#5e6470" stroke={D2} /><path d="M22 21v8l6-4z" fill={D2} stroke="none" /></>,
};
const Big = ({ n }) => <Svg s={64} vb="0 0 32 32">{rib[n]}</Svg>;

const pencil = <path d="M8 13l1-3 5-6 2 1.500-5 7z" fill={D} stroke={D2} strokeWidth=".8" />;
const tag = t => <><path d="M1 10.500h14V16H1z" fill="#565c68" stroke="none" /><text x="8" y="15.500" textAnchor="middle" fontSize="6" fontWeight="700" fill="#8b909a" stroke="none">{t}</text></>;
const small = {
    fnew: <><path d="M0 2h5l2 2h5v11H0z" fill={D} stroke="none" /><path d="M11 0v6M8 3h6" stroke={D} /><path d="M8 7.500h7v8H8z" fill={D} stroke={D2} /><path d="M10 13l3-3M11 10h2v2" stroke={D2} /></>,
    fset: <><path d="M0 2h5l2 2h7v11H0z" fill={D} stroke="none" /><path d="M4.500 6.500h5v6h-5zM6 11l2-3" stroke={D2} />{pencil}</>,
    fwork: <><path d="M0 2h5l2 2h7v11H0z" fill={D} stroke="none" />{pencil}</>,
    sman: <><path d="M1 1h13v14H1z" fill={D} stroke="none" /><path d="M4 11q0-5 5-6M6 4h4v4" stroke={D2} /><path d="M7 8h8.500v8H7zM9 11h1M9 13h1M11 11h3M11 13h3" fill={D} stroke={D2} /></>,
    sval: <><path d="M1 1h13v13H1z" fill={D} stroke="none" /><path d="M4 11q0-5 5-6M6 4h4v4" stroke={D2} strokeWidth="1.500" /><path d="M8 12l3 3 5-6" stroke={D} strokeWidth="2" /></>,
    ssyn: <><path d="M1 1h13v13H1z" fill={D} stroke="none" /><path d="M4 10q0-5 5-6M6 3h4v4" stroke={D2} strokeWidth="1.500" /><circle cx="11.500" cy="12" r="3" fill={D2} stroke={D} strokeDasharray="7 2" /></>,
    note: <><path d="M1 1h14v9H8l-3 5v-5H1z" fill={D} stroke="none" /><path d="M4 4h8M4 7h5" stroke={D2} /></>,
    macro: <><path d="M1 1h10v13H1z" fill={D} stroke="none" /><path d="M3 4h5v3H4v4h4" stroke={D2} /><path d="M12 9v7M9 12.500h7" stroke={D} strokeWidth="1.500" /></>,
    term: <><path d="M1 1h12v10H1z" fill={D} stroke="none" /><path d="M3 4l2 2-2 2" stroke={D2} /><circle cx="12" cy="10" r="2.500" fill={D} stroke={D2} /><path d="M8 16q0-4 4-4t4 4z" fill={D} stroke="none" /></>,
    edit: <><path d="M1 1h11v13H1z" fill={D} stroke="none" /><path d="M3 4h5v3H4v4h4" stroke={D2} />{pencil}</>,
    mgr: <><path d="M1 0h10v14H1z" fill={D} stroke="none" /><path d="M3 3h5v3H4v4h4" stroke={D2} /><path d="M8 6h7.500v9.500H8zM10 8h3v2h-3zM12 11v4M10 13h4" fill={D} stroke={D2} /></>,
    cin: <><path d="M1 0h14v10H1z" fill={D} stroke="none" /><path d="M0 5h7M4 2l3 3-3 3M10 2v8" stroke={D2} strokeWidth="1.500" />{tag('CUI')}</>,
    cout: <><path d="M1 0h14v10H1z" fill={D} stroke="none" /><path d="M4 2v5h9M10 4l3 3-3 3" stroke={D2} strokeWidth="1.500" />{tag('CUI')}</>,
    pgp: <><path d="M1 0h11v10H1z" fill={D} stroke="none" />{pencil}{tag('PGP')}</>,
    vba: <><path d="M1 0h11v10H1z" fill={D} stroke="none" />{pencil}{tag('VBA')}</>,
    lisp: <><path d="M1 0h11v10H1z" fill={D} stroke="none" />{pencil}{tag('LISP')}</>,
    rvba: <><path d="M1 0h13v10H1z" fill={D} stroke="none" /><path d="M6 2v6l4-3z" fill={D2} stroke="none" />{tag('VBA')}</>,
    layer: <><path d="M4 0h9l-3 5H1zM1 6h7v3H1zM1 11h7v3H1zM10 7h5v9h-5z" fill={D} stroke="none" /></>,
    check: <><path d="M1 5l6 1 1 1 1-1 6-1v10H1z" fill={D} stroke="none" /><path d="M8 7v9M3 8h3M3 11h3M10 8h3M10 11h3" stroke={D2} /><path d="M8 2l3 3 4-5" stroke={D} strokeWidth="1.500" /></>,
    conf: <><path d="M1 5l6 1 1 1 1-1 6-1v10H1z" fill={D} stroke="none" /><path d="M8 7v9M3 8h3M3 11h3" stroke={D2} />{pencil}</>,
};
const Sm = ({ n }) => <Svg>{small[n]}</Svg>;

const TvLogo = ({ s = 48 }) => (
    <Svg s={s} vb="0 0 48 48" st="none"><rect width="48" height="48" rx="4" fill="#0b78d8" /><circle cx="24" cy="24" r="20" fill="#fff" /><path d="M6 24l10-7v5h16v-5l10 7-10 7v-5H16v5z" fill="#0b78d8" /></Svg>
);
// folded blue ribbon of the Civil 3D mark, 48 x 48
const CivilMark = () => (
    <g stroke="none">
        <path d="M40 6Q30-2 18 4 6 11 7 26q1 14 13 18 10 3 19-4l-3-9q-8 5-14 2-6-4-5-12 1-9 8-11 6-1 11 4z" fill="#2a93cf" />
        <path d="M40 6Q30-2 18 4l-5 5q10-4 14 2 5-1 9 3z" fill="#5cc0ea" />
        <path d="M9 36q4 7 11 8 10 3 19-4l-3-9q-8 5-14 2-6 4-13 3z" fill="#7fd0ee" />
    </g>
);
const Help = ({ s = 32 }) => <Svg s={s} vb="0 0 32 32" st="none"><circle cx="16" cy="16" r="15.500" fill={G} /><text x="16" y="23" textAnchor="middle" fontSize="20" fill="#3b4453">?</text></Svg>;
const Restore = ({ s = 22, c = '#fff' }) => <Svg s={s} vb="0 0 22 22"><path d="M2 6h14v14H2zM6 6V2h14v14h-4" stroke={c} strokeWidth="2" /></Svg>;
const Min = ({ s = 20, y = 12 }) => <Svg s={s} vb="0 0 20 20"><path d={`M0 ${y}h20`} stroke="#f0f0f0" strokeWidth="3" /></Svg>;
const Grip = ({ v }) => v
    ? <Svg s={8} h={24} vb="0 0 8 24"><path d="M2 0v24M6 0v24" stroke="#b0b4bb" strokeWidth="2" strokeDasharray="2 2" /></Svg>
    : <Svg s={30} h={8} vb="0 0 30 8"><path d="M0 2h30M0 6h30" stroke="#c9ccd1" strokeWidth="2" strokeDasharray="2 2" /></Svg>;

/* ---------- data ---------- */

const menu = ['Home', 'Insert', 'Annotate', 'Modify', 'Analyze', 'View', 'Manage', 'Output', 'Survey', 'Rail', 'Transparent', 'InfraWorks', 'Collaborate', 'Help', 'Add-ins', 'Featured Apps', 'Geotechnical Module', 'River', 'Express Tools', 'Plex-Earth 5D'];

const tree = [
    { t: 'Macro Investigation', i: 'page', root: 1, box: '-', a: 'start' },
    { t: 'Points', i: 'points', box: 'o' },
    { t: 'Point Groups', i: 'groups', box: '+' },
    { t: 'Surfaces', i: 'surfaces' },
    { t: 'Alignments', i: 'align', box: '+' },
    { t: 'Feature Lines', i: 'feature' },
    { t: 'Sites', i: 'sites' },
    { t: 'Catchments', i: 'catch' },
    { t: 'Pipe Networks', i: 'pipe', box: '+' },
    { t: 'Pressure Networks', i: 'pipe' },
    { t: 'Bridges', i: 'bridge' },
    { t: 'Corridors', i: 'corridor' },
    { t: 'Assemblies', i: 'assembly', box: '+' },
    { t: 'Intersections', i: 'inter' },
    { t: 'Survey', i: 'survey', box: '+' },
    { t: 'View Frame Groups', i: 'frame', last: 1 },
    { t: 'Data Shortcuts [C:\\Users\\david\\OneDrive\\ドキュメント\\Civil 3D...', i: 'db', root: 1, box: '-', a: 'end', link: 1 },
    { t: 'Surfaces', i: 'surfaces', box: '+', link: 1 },
    { t: 'Alignments', i: 'align', box: '+', link: 1 },
    { t: 'Pipe Networks', i: 'pipe', link: 1 },
    { t: 'Pressure Networks', i: 'pipe', link: 1 },
    { t: 'Corridors', i: 'corridor', link: 1 },
    { t: 'View Frame Groups', i: 'frame', link: 1, last: 1 },
];

const props = [
    ['General', [['Color', 'ByLayer', 'swatch'], ['Layer', 'Property Boundary Li...'], ['Linetype', 'ByLayer', 'line'], ['Linetype scale', '1.000'], ['Lineweight', 'ByLayer', 'line'], ['Transparency', 'ByLayer'], ['Thickness', '0.000']]],
    ['3D Visualization', [['Material', 'ByLayer']]],
    ['Plot style', [['Plot style', 'ByColor', 'dim'], ['Plot style table', 'None'], ['Plot table attach...', 'Model', 'dim'], ['Plot table type', 'Not available', 'dim']]],
    ['View', [['Center X', '52197.119', 'dim'], ['Center Y', '153907.022', 'dim'], ['Center Z', '0.000', 'dim'], ['Height', '242.075', 'dim'], ['Width', '338.384', 'dim']]],
    ['Misc', [['Annotation scale', '1:1000'], ['UCS icon On', 'Yes'], ['UCS icon at origin', 'No'], ['UCS per viewport', 'Yes'], ['UCS Name', ''], ['Visual Style', '2D Wireframe']]],
];

const surveyPoints = [
    [876, 20], [528, 157], [1405, 157], [1126, 195], [1147, 206], [1203, 211], [1229, 211], [1283, 213], [498, 269], [532, 390],
    [748, 970], [777, 973], [788, 1024], [750, 1050], [788, 1045], [732, 1079], [777, 1090], [854, 1103], [950, 1112], [1018, 1118],
    [1167, 1136], [735, 1201], [751, 1194], [846, 1239], [886, 1244], [690, 1283], [899, 1286], [1236, 1214], [1345, 1306], [1365, 1309],
    [1533, 1019], [1535, 1087], [1515, 1136], [1531, 1160], [1595, 1244], [1728, 1267], [1760, 1285], [1657, 1330],
];

const historyText = `Specify next point or [Close/Undo]: *Cancel*
Command: '_ACTSTOP
Command: Test
LINE
Specify first point:
>>Enter point number:
>>Enter point number: 1-3
Resuming LINE command.`;

/* ---------- sections ---------- */

const Header = () => (
    <AppHeader>
        <AppButton aria-label="Application menu">
            <Svg s={74} h={74} vb="0 0 74 74" st="none">
                <g transform="translate(7 1) scale(1.05)"><CivilMark /></g>
                <text x="36" y="69" textAnchor="middle" fontSize="15" fontWeight="700" fill="#222">C3D</text>
                <path d="M56 33h14l-7 8z" fill="#333" />
            </Svg>
        </AppButton>
        <HeaderRows>
            <QuickRow>
                <QuickIcons>
                    <IconButton aria-label="New"><Svg st="none" c={G}><path d="M1 1h9v5h5v10H1zM11 1l4 4h-4z" /></Svg></IconButton>
                    <IconButton aria-label="Open"><Svg st="none" c={G}><path d="M0 2h5l2 2h5v2H5L1 14H0zM6 7h10l-3 9H2z" /></Svg></IconButton>
                    <IconButton aria-label="Save"><Svg st="none" c="#b9bbbf"><path d="M0 0h16v16H0z" /><path d="M3 0h9v6H3zM3 9h10v7H3z" fill="#fff" /><path d="M5 12h2v3H5z" fill="#333" /></Svg></IconButton>
                    <IconButton aria-label="Open from mobile"><Svg st="none"><path d="M1 0h10v16H1z" fill={G} /><path d="M2 2h8v11H2z" fill="#77797d" /><path d="M7 9h3l1 1h4v5H7z" fill="#f0c26a" /></Svg></IconButton>
                    <IconButton aria-label="Save to mobile"><Svg st="none"><path d="M4 0h10v16H4z" fill={G} /><path d="M5 2h8v11H5z" fill="#77797d" /><path d="M1 5h5V2.500L11 6.500l-5 4V8H1z" fill={B} /></Svg></IconButton>
                    <IconButton aria-label="Plot"><Svg st="none"><path d="M3 0h10v6H3z" fill="#fff" /><path d="M0 6h16v7H0z" fill={G} /><path d="M3 10h10v6H3z" fill={B} stroke="#fff" /></Svg></IconButton>
                    <IconButton aria-label="Undo"><Svg st="none" c={G}><path d="M0 7l7-6v4q8 0 9 8-3-4-9-4v4z" /></Svg></IconButton>
                    <Down />
                    <IconButton aria-label="Redo"><Svg st="none" c="#6c727d"><path d="M16 7L9 1v4q-8 0-9 8 3-4 9-4v4z" /></Svg></IconButton>
                    <Down c="#9a9ea6" />
                </QuickIcons>
                <Workspace>
                    <Svg st={G} s={32}><circle cx="8" cy="8" r="4.500" strokeWidth="2.500" /><circle cx="8" cy="8" r="6.800" strokeWidth="2.400" strokeDasharray="2.700 2.640" /></Svg>
                    <select defaultValue="c" aria-label="Workspace"><option value="c">Civil 3D</option></select>
                    <Down c="#f0f0f0" s={15} />
                </Workspace>
                <IconButton $w={38} aria-label="Customize"><Svg s={16} st="none" c={G}><path d="M0 1h16v2H0zM0 6h16l-8 9z" /></Svg></IconButton>
                <Title><span>Autodesk Civil 3D 2021</span><span>Macro Investigation.dwg</span></Title>
                <Account>
                    <Svg s={12} vb="0 0 12 12" st="none" c="#fff"><path d="M3 0l7 6-7 6z" /></Svg>
                    <SearchInput aria-label="Search" placeholder="Type a keyword or phrase" />
                    <Svg><circle cx="6" cy="7" r="5" strokeWidth="1.500" /><path d="M10 11l4 4" stroke="#d9a678" strokeWidth="2" /></Svg>
                    <Svg st="none" c="#7cc4fb"><circle cx="8" cy="4" r="4" /><path d="M0 16q0-7 8-7t8 7z" /></Svg>
                    <UserName>david.sperling...</UserName>
                    <Down />
                    <Svg><path d="M1 1h3l2 10h9M5 4h10l-1 5H6z" fill={G} /><circle cx="7" cy="14" r="1.300" fill={G} /><circle cx="13" cy="14" r="1.300" fill={G} /></Svg>
                    <Svg><path d="M8 3L2 14M8 3l6 11M2 13h12" strokeWidth="1.800" /><circle cx="8" cy="3" r="2" fill={G} /><circle cx="2.500" cy="13" r="2" fill={G} /><circle cx="13.500" cy="13" r="2" fill={G} /></Svg>
                    <Down />
                    <Divider />
                    <Help />
                    <Down />
                </Account>
                <WinControls>
                    <button aria-label="Minimize"><Min s={16} y={19} /></button>
                    <button aria-label="Restore"><Svg s={24} vb="0 0 24 24"><path d="M2 11h14v10H2zM8 11V3h14v10h-6" stroke={G} strokeWidth="2.500" /></Svg></button>
                    <button aria-label="Close"><Cross s={22} w={2.500} /></button>
                </WinControls>
            </QuickRow>
            <MenuRow>
                {menu.map(m => <MenuTab key={m} href="#" $on={m === 'Manage'}>{m}</MenuTab>)}
                <GeoTab href="#">Geolocation</GeoTab>
                <IconButton $w={48} $h={39} aria-label="Minimize ribbon"><Svg s={48} h={18} vb="0 0 48 18" st="none" c={G}><path d="M0 1h30v16H0zM36 6h12l-6 8z" /><path d="M15 5l5 8H10z" fill="#222" /></Svg></IconButton>
            </MenuRow>
        </HeaderRows>
    </AppHeader>
);

const RibbonPanel = ({ w, label, arrow, children }) => (
    <Panel $w={w}>
        <PanelBody>{children}</PanelBody>
        <PanelLabel>{label}{arrow && <Down s={14} />}</PanelLabel>
    </Panel>
);
const Smalls = ({ w, items }) => (
    <SmallCol $w={w}>
        {items.map(([n, t, arrow]) => <SmallButton key={n} aria-label={t || n}><Sm n={n} />{t}{arrow && <Down s={10} />}</SmallButton>)}
    </SmallCol>
);

const RibbonBar = () => (
    <Ribbon>
        <RibbonPanel w={717} label="Data Shortcuts" arrow>
            <BigButton $w={142}><Big n="db" />{'Create Data\nShortcuts'}</BigButton>
            <Smalls w={278} items={[['fnew', 'New Shortcuts Folder'], ['fset', 'Set Shortcuts Folder'], ['fwork', 'Set Working Folder']]} />
            <Smalls items={[['sman', 'Manage Data Shortcuts'], ['sval', 'Validate Data Shortcuts'], ['ssyn', 'Synchronize References']]} />
        </RibbonPanel>
        <RibbonPanel w={396} label="Action Recorder" arrow>
            <BigButton $w={86}><Svg s={64} vb="-1 -1 34 34">{rib.stop}</Svg>Stop</BigButton>
            <Smalls items={[['note'], ['macro'], ['term']]} />
            <PlayCol>
                <PlayRow>
                    <SmallButton><Svg s={32} st="none" c={D}><path d="M1 0l12 8-12 8z" /></Svg>Play</SmallButton>
                    <SmallButton aria-label="Edit"><Sm n="edit" /></SmallButton>
                    <SmallButton aria-label="Manage"><Sm n="mgr" /></SmallButton>
                </PlayRow>
                <MacroSelect>
                    <select defaultValue="t" aria-label="Available macros"><option value="t">Test</option></select>
                    <Down c="#9aa0ac" s={14} />
                </MacroSelect>
            </PlayCol>
        </RibbonPanel>
        <RibbonPanel w={396} label="Customization">
            <BigButton $w={108}><Big n="cui" />{'User\nInterface'}</BigButton>
            <BigButton $w={94}><Big n="tool" />{'Tool\nPalettes'}</BigButton>
            <Smalls items={[['cin', 'Import'], ['cout', 'Export'], ['pgp', 'Edit Aliases', 1]]} />
        </RibbonPanel>
        <RibbonPanel w={455} label="Applications" arrow>
            <BigButton $w={137}><Big n="load" />{'Load\nApplication'}</BigButton>
            <BigButton $w={76}><Big n="run" />{'Run\nScript'}</BigButton>
            <Smalls items={[['vba', 'Visual Basic Editor'], ['lisp', 'Visual LISP Editor'], ['rvba', 'Run VBA Macro']]} />
        </RibbonPanel>
        <RibbonPanel w={226} label="CAD Standards">
            <SmallCol $w={12} />
            <Smalls items={[['layer', 'Layer Translator'], ['check', 'Check'], ['conf', 'Configure']]} />
        </RibbonPanel>
        <RibbonPanel w={277} label="Styles">
            <BigButton $w={86}><Big n="imp" />Import</BigButton>
            <BigButton $w={72}><Big n="purge" />Purge</BigButton>
            <BigButton $w={116}><Big n="ref" />Reference</BigButton>
        </RibbonPanel>
        <RibbonPanel w={225} label="Property Set Data">
            <BigButton $w={223}><Big n="prop" />Define Property Sets</BigButton>
        </RibbonPanel>
        <RibbonPanel w={290} label="Visual Programming">
            <BigButton $w={126}><Big n="dyn" />Dynamo</BigButton>
            <BigButton $w={160}><Big n="play" />Dynamo Player</BigButton>
        </RibbonPanel>
    </Ribbon>
);

const ToolspacePanel = () => (
    <Toolspace>
        <PaletteTitle><Grip v />TOOLSPACE</PaletteTitle>
        <PaletteTools>
            <IconButton aria-label="Item view"><Svg st="none"><path d="M0 0h16v16H0z" fill={G} /><path d="M0 0h16v2.500H0z" fill="#77797d" /><path d="M3 7l3-3h8v7l-3 3H3z" fill="#3fbf74" /><path d="M3 7l3-3h8l-3 3z" fill="#6fd99a" /></Svg></IconButton>
            <IconButton aria-label="Panorama"><Svg st="none" c="#e6e6e6"><path d="M1 1h6v2H1zM1 4h6v2H1zM1 7h6v2H1zM7 10h4v6H7zM12 10h4v6h-4z" /><path d="M9 2.500h5v4M12 5l2 2 2-2" stroke="#e6e6e6" fill="none" /></Svg></IconButton>
            <IconButton aria-label="Preview"><Svg st="none"><path d="M0 1h2v13H0zM3 1h13v5h-3v8H3zM14 7h2v7h-2z" fill="#e6e6e6" /><path d="M5 6h5M5 8.500h5M5 11h5M8 3.500h5" stroke="#888" strokeDasharray="2 1" /></Svg></IconButton>
            <IconButton aria-label="Help"><Help /></IconButton>
        </PaletteTools>
        <ViewSelect>
            <select defaultValue="a" aria-label="View"><option value="a">Active Drawing View</option></select>
            <Svg s={16}><path d="M1 4l7 8 7-8" stroke="#555" strokeWidth="2" /></Svg>
        </ViewSelect>
        <Tree>
            <TreeRows>
                {tree.map((r, n) => {
                    const box = r.box && (
                        <Toggle aria-label={r.t}>
                            <Svg s={10} vb="0 0 10 10">
                                {r.box === 'o' ? <circle cx="5" cy="5" r="4.500" fill="#555" stroke="none" /> : <path d={r.box === '+' ? 'M0 5h10M5 0v10' : 'M0 5h10'} stroke="#3a4f9c" strokeWidth="2" />}
                            </Svg>
                        </Toggle>
                    );
                    return (
                        <TreeRow key={n} $bold={n === 0} $long={r.t.length > 40}>
                            <Guide $line={r.root ? r.a : n < 16 && 'full'} $stub={r.root}>{r.root && box}</Guide>
                            {!r.root && <Guide $line={r.last ? 'end' : 'full'} $stub>{box}</Guide>}
                            <TreeIcon name={r.i} link={r.link} />
                            <span>{r.t}</span>
                        </TreeRow>
                    );
                })}
            </TreeRows>
            <TreeScroll>
                <button aria-label="Scroll left"><Svg s={16}><path d="M12 1L5 8l7 7" stroke="#555" strokeWidth="3" /></Svg></button>
                <div />
                <button aria-label="Scroll right"><Svg s={16}><path d="M4 1l7 7-7 7" stroke="#555" strokeWidth="3" /></Svg></button>
            </TreeScroll>
        </Tree>
        <Preview />
    </Toolspace>
);

const Drawing = () => (
    <Canvas>
        <svg aria-hidden="true" fill="none">
            <path d={surveyPoints.map(([x, y]) => `M${x - 12} ${y - 12}l24 24m0 -24l-24 24`).join('')} stroke="#d00d10" strokeWidth="2" />
            <path d="M498 269L532 380" stroke="#d00d10" strokeWidth="2" />
            <path d="M1642 839h188M1736 745v188" stroke="#e8e8e8" strokeWidth="2" />
            <path d="M1744 805h28v7l-4 5 4 6v7h-28q-2 0-2-3v-19q0-3 2-3z" fill="#3a3a3a" stroke="#ddd" strokeWidth="2" />
            <path d="M1744 808h10l6 8-6 10h-10z" fill="#fff" />
            <path d="M1746 816h3M1751 816h3" stroke="#222" strokeWidth="4" />
            <path d="M39 1480v86M39 1576h98M30 1566h19v20H30z" stroke="#e8e8e8" strokeWidth="2" />
            <path d="M44 1447l11 13 11-13M55 1460v12M145 1549l24 25M169 1549l-24 25" stroke="#d6d8dc" strokeWidth="2" />
            <path d="M8 60l7-8 7 8v10H8zM20 50l6-4 6 5v8h-8z" fill="#d6d8dc" />
            <path d="M11 66h8M24 54h5" stroke="#222" strokeWidth="3" />
        </svg>
        <CanvasTop>
            <span>[−][Top][2D Wireframe]</span>
            <div>
                <button aria-label="Minimize viewport"><Min y={14} /></button>
                <button aria-label="Restore viewport"><Restore s={20} /></button>
                <button aria-label="Close viewport"><Cross s={18} c="#fff" w={4} /></button>
            </div>
        </CanvasTop>
        <ViewCube>
            <Svg s={262} h={260} vb="0 0 262 260" st="none">
                <circle cx="131" cy="124" r="104" stroke="#444950" strokeWidth="24" />
                <rect x="82" y="75" width="98" height="98" fill="#b2b3b5" stroke="#8f9093" />
                <rect x="100" y="94" width="62" height="62" fill="#9ea3a8" />
                <text x="131" y="132" textAnchor="middle" fontSize="22" fontWeight="700" fill="#4d525e">TOP</text>
                <g fontFamily="Liberation Sans" fontSize="38" fontWeight="700" fill="#a5a8ac" textAnchor="middle">
                    <text x="131" y="30">N</text>
                    <text x="131" y="247">S</text>
                    <text x="22" y="138">W</text>
                    <text x="240" y="138">E</text>
                </g>
            </Svg>
            <WcsButton>WCS<Svg s={14} vb="0 0 12 12" st="#d0d2da"><path d="M0 2h12l-6 8z" /></Svg></WcsButton>
        </ViewCube>
    </Canvas>
);

const PropertiesPanel = () => (
    <Properties>
        <PaletteTitle><Grip v />PROPERTIES</PaletteTitle>
        <PropTop>
            <SelectionBox>
                <select defaultValue="n" aria-label="Selection"><option value="n">No selection</option></select>
                <Down s={16} />
            </SelectionBox>
            <IconButton aria-label="Toggle PICKADD"><Svg st="none"><path d="M0 2h7v9H0zM5 7h9v9H5z" fill="#7cc4fb" /><path d="M12 0v8M8 4h8" stroke="#4fcf82" strokeWidth="1.800" /></Svg></IconButton>
            <IconButton aria-label="Select objects"><Svg><path d="M.5.500h13v10H.5z" stroke="#4fcf82" strokeDasharray="2 1" /><path d="M3 3h8v6H3z" fill="#7fd39c" stroke="none" /><Cursor /></Svg></IconButton>
            <IconButton aria-label="Quick select"><Svg><path d="M0 4v10l2-2 1 3 2-1-1-2 3-1z" fill="#fff" stroke="none" /><path d="M9 0L5 5h3L6 9l6-6H9z" fill="#f5cf7a" stroke="none" /><path d="M8 7h8v9H8z" fill="#eee" stroke="none" /><path d="M9 9.500h1M11 9.500h4M9 11.500h1M11 11.500h4M9 13.500h1M11 13.500h4" stroke="#2f8fe0" /></Svg></IconButton>
        </PropTop>
        <PropTable>
            <colgroup><Col $w={34} /><Col $w={212} /><col /></colgroup>
            {props.map(([name, rows], n) => (
                <tbody key={name}>
                    {n > 0 && <tr className="gap"><td colSpan={3} /></tr>}
                    <tr><th colSpan={3}><div>{name}<Down s={16} /></div></th></tr>
                    {rows.map(([k, v, kind]) => (
                        <tr key={k}>
                            <td />
                            <td>{k}</td>
                            <Value $dim={kind === 'dim'} $swatch={kind === 'swatch'}>
                                <div>{kind === 'swatch' && <Swatch />}{kind === 'line' && <Stroke />}{v}</div>
                            </Value>
                        </tr>
                    ))}
                </tbody>
            ))}
        </PropTable>
    </Properties>
);

const Tools = ({ icons }) => (
    <Strip>
        <Grip />
        {icons.map((ic, n) => ic ? <button key={n} aria-label={'Tool ' + (n + 1)}><Svg>{ic}</Svg></button> : <hr key={n} />)}
    </Strip>
);

const CommandLine = () => (
    <CommandWindow>
        <CommandGrip>
            <Svg s={34} h={12} vb="0 0 34 12"><path d="M0 2h34M0 8h34" stroke={G} strokeWidth="4" strokeDasharray="4 2" /></Svg>
            <Cross s={18} w={3} />
            <Svg s={30} h={30}><path d="M1 15L9 6" strokeWidth="3" stroke="#fff" /><path d="M9 7q-2-4 3-7v4l2 1 2-2q0 5-5 6z" fill="#fff" stroke="none" /></Svg>
        </CommandGrip>
        <CommandMain>
            <History>{historyText}</History>
            <CommandInput>
                <Svg s={30} h={26} vb="0 0 30 26"><path d="M1 1h28v24H1z" fill="#eee" stroke="#777" strokeWidth="2" /><path d="M1 1h28v5H1z" fill="#666" /><path d="M5 11l5 4-5 4M12 20h6" stroke="#777" strokeWidth="2" /></Svg>
                <Down c="#777" s={16} />
                <b>TEST</b>
                <input aria-label="Command" defaultValue="Specify first point:" />
                <Svg s={12} vb="0 0 12 12" st="none" c="#666"><path d="M0 10h12L6 2z" /></Svg>
            </CommandInput>
        </CommandMain>
    </CommandWindow>
);

const Person = ({ extra }) => <Svg h={34}><path d="M8 0l1.500 3v4l4.500 8h-3L8 10l-3 5H2l4.500-8V3z" fill="#e0e1e3" stroke="none" />{extra}</Svg>;
const A = () => <StatusItem $w={28} aria-label="Options"><Down s={14} /></StatusItem>;
const S = ({ w = 46, on, label = 'Toggle', children }) => <StatusItem $w={w} $on={on} aria-label={label}>{children}</StatusItem>;

const StatusBar = () => (
    <StatusRow>
        <LayoutTab $w={109} $on>Model</LayoutTab>
        <LayoutTab $w={113}>Layout1</LayoutTab>
        <LayoutTab $w={119}>Layout2</LayoutTab>
        <LayoutTab $w={46} aria-label="New layout"><Svg s={46} h={18} vb="0 0 46 18"><path d="M25 1v16M17 9h16" stroke="#c3c6cc" strokeWidth="3" /></Svg></LayoutTab>
        <StatusTools>
            <StatusGroup><StatusItem $w={91}>MODEL</StatusItem></StatusGroup>
            <StatusGroup>
                <S w={44}><Svg s={30}><path d="M4 0v16M8 0v16M12 0v16M0 4h16M0 8h16M0 12h16" /></Svg></S>
                <S w={52}><Svg s={26}><path d="M2 2h13M2 8h13M2 14h13" strokeWidth="2" strokeDasharray="2 3" /></Svg></S>
                <A />
            </StatusGroup>
            <StatusGroup>
                <S w={42}><Svg s={30}><path d="M1 0v15h15M1 10h5v5" /></Svg></S>
                <S w={52}><Svg><circle cx="7" cy="9" r="6" /><path d="M7 9h9M7 9l7-9M11 9V4" /></Svg></S>
                <A />
                <S w={50}><Svg><path d="M8 0v16" stroke="#5fcf72" /><path d="M4 1l8 14" stroke="#e06060" /><circle cx="8" cy="8" r="1.500" /></Svg></S>
                <A />
            </StatusGroup>
            <StatusGroup $tight>
                <S><Svg s={30}><path d="M15 1L2 15h13" /><path d="M7 8h3v3H7z" fill={G} /></Svg></S>
                <S w={52}><Svg><path d="M5 3h10v13M3 6v10h12" /><path d="M1 1h4v4H1z" stroke="#e8a06a" /></Svg></S>
                <A />
            </StatusGroup>
            <StatusGroup $tight><S w={45}><Svg s={28}><path d="M0 2h16M0 6h9M0 10.500h14M0 14.500h16" strokeWidth="2.500" /></Svg></S></StatusGroup>
            <StatusGroup $tight><S w={43} on><Svg s={30} st="#fff"><path d="M1 1h14v14H1z" /><path d="M2 4h12M2 8h12M2 12h12" strokeWidth="2" strokeDasharray="2 2" /><path d="M4 6h10M4 10h10" strokeWidth="2" strokeDasharray="2 2" /></Svg></S></StatusGroup>
            <StatusGroup><S w={43} on><Svg s={32} st="#fff"><path d="M1 3h3M3 1v12M4 3h9M6 6h9" strokeDasharray="2 1" /><path d="M8 7h8v9H8z" fill="#fff" /></Svg></S></StatusGroup>
            <StatusGroup><S w={43} on><Svg s={32} st="#fff"><path d="M8 0l6 4v8l-6 4-6-4V4zM8 8V0M8 8l6 5M8 8l-6 5" /></Svg></S><A /></StatusGroup>
            <StatusGroup>
                <S w={44} on><Person extra={<circle cx="13" cy="4" r="2.200" stroke="#fff" />} /></S>
                <S><Person extra={<path d="M14 1l-4 4h4l-3 3" stroke="#fff" />} /></S>
                <S w={50}><Person /></S>
                <S w={80} label="Scale">1:1000</S>
                <A />
            </StatusGroup>
            <StatusGroup>
                <S><Svg s={28}><circle cx="8" cy="8" r="4" strokeWidth="3" /><circle cx="8" cy="8" r="6.800" strokeWidth="2.400" strokeDasharray="2.700 2.640" /></Svg></S>
                <A />
            </StatusGroup>
            <StatusGroup $tight><S><Svg s={30}><path d="M8 0v16M0 8h16" strokeWidth="1.500" /></Svg></S></StatusGroup>
            <StatusGroup>
                <S><Svg s={16} h={32} vb="0 0 8 16" st="none" c="#e0e1e3"><path d="M0 0h8v16H0z" /><path d="M4 2h4v1H4zM4 5h4v1H4zM4 8h4v1H4zM4 11h4v1H4zM4 14h4v1H4z" fill="#3b4453" /></Svg></S>
                <S w={112} label="Units">Decimal</S>
                <A />
            </StatusGroup>
            <StatusGroup>
                <S><Svg><path d="M2 4l6-4 6 4" strokeDasharray="2 1" /><path d="M8 3l7 5-7 4-7-4z" fill="#3d9be6" stroke="none" /><path d="M1 10l7 4 7-4v2l-7 4-7-4z" fill={G} stroke="none" /></Svg></S>
                <S w={84} label="Elevation">3.500</S>
            </StatusGroup>
            <StatusGroup $tight><S><Svg><path d="M1 1h5v6H1zM6 10l3 6H3z" /><circle cx="12.500" cy="7" r="3" /></Svg></S></StatusGroup>
            <StatusGroup><S w={44}><Svg st="none"><path d="M4 3h10v9H4z" fill="#2f8fd0" /><path d="M1 10h8v5H1z" fill="#f0b429" /><path d="M3 0v8M0 3h7" stroke="#e0e1e3" /><path d="M7 11l4 4 5-8" stroke="#45b554" strokeWidth="2.500" /></Svg></S></StatusGroup>
            <StatusGroup>
                <S><Svg s={30} h={26} vb="0 0 16 14"><path d="M.5.500h15v13H.5zM9 6l4-3M10.500 2.500H13V5M7 8l-4 3M3 9v2.500h2.500" /></Svg></S>
                <S><Svg s={32}><path d="M0 2.500h16M0 8h16M0 13.500h16" strokeWidth="2" /></Svg></S>
            </StatusGroup>
        </StatusTools>
    </StatusRow>
);

const taskIcons = [
    ['Cortana', <circle cx="24" cy="24" r="14" stroke="#fff" strokeWidth="3.500" />],
    ['Task View', <path d="M9 10v5h17v-5M9 38v-5h17v5M9 19h17v10H9zM33 9v14M33 27v12" stroke="#fff" strokeWidth="2.500" />],
    ['Chrome', <g stroke="none"><circle cx="24" cy="24" r="21" fill="#2ca24c" /><path d="M24 3a21 21 0 0 1 19 12H24L14 28 5 15A21 21 0 0 1 24 3z" fill="#df4a3a" /><path d="M43 15a21 21 0 0 1-19 30l9-17 0-13z" fill="#fbc41c" /><circle cx="24" cy="24" r="10" fill="#fff" /><circle cx="24" cy="24" r="8" fill="#4a88f2" /></g>, 1],
    ['File Explorer', <g stroke="none"><path d="M4 7h16l4 5h20v30H4z" fill="#f7cf62" /><path d="M4 7h16l3 5H4z" fill="#e3a022" /><path d="M10 26h28v16h-8v-8H18v8h-8z" fill="#3f9ae0" /></g>],
    ['Civil 3D', <g stroke="none"><path d="M1 1h46v46H1z" fill="#e6f4fb" /><g transform="translate(5 2) scale(.78)"><CivilMark /></g><text x="31" y="46" textAnchor="middle" fontSize="9" fontWeight="700" fill="#1d7fbd">C3D</text></g>, 1],
    ['SolidWorks', <g stroke="none"><path d="M3 10l18-7 21 6v28H6z" fill="#c8161d" /><path d="M3 10l18-7 21 6-20 5z" fill="#ec4b4b" /><text x="23" y="28" textAnchor="middle" fontSize="16" fontWeight="700" fill="#fff">SW</text><text x="28" y="46" textAnchor="middle" fontSize="12" fontWeight="700" fill="#fff">2021</text></g>],
    ['Solar', <g stroke="none"><path d="M24 4A19 19 0 0 0 16 41l6-16 2-9 16-5Q34 4 24 4z" fill="#f8c51c" /><path d="M22 16l18-5v26L28 47l-8-10z" fill="#23639c" /><path d="M21 24l19-4M20 32l20-4M28 15v31M34 13v29" stroke="#7fb2dd" /></g>],
    ['TeamViewer', <g stroke="none"><rect width="48" height="48" rx="3" fill="#0b78d8" /><circle cx="24" cy="24" r="19" fill="#fff" /><path d="M7 24l9-7v5h16v-5l9 7-9 7v-5H16v5z" fill="#0b78d8" /></g>],
    ['Firefox', <g stroke="none"><circle cx="24" cy="26" r="20" fill="#ff5a2c" /><path d="M28 2q18 10 16 26-2 14-18 18 14-14 2-44z" fill="#ffd23e" /><path d="M4 22q0-8 6-14 2 5 8 6z" fill="#ff9a2a" /><circle cx="23" cy="26" r="10" fill="#8a4df0" /></g>],
    ['Feather', <g stroke="none"><circle cx="26" cy="23" r="20" fill="#1a2bd0" /><path d="M3 44q6-22 38-38-2 22-20 30-8 1-18 8z" fill="#8fd0ff" /><path d="M5 43Q16 24 33 12" stroke="#fff" strokeWidth="1.500" /></g>],
    ['Revit', <g stroke="none"><path d="M1 1h46v46H1z" fill="#dfe9f5" /><text x="23" y="33" textAnchor="middle" fontSize="30" fontWeight="700" fill="#205a9e">R</text><path d="M22 40h18v3H22z" fill="#205a9e" /></g>, 1],
];

const WindowsTaskbar = () => (
    <Taskbar>
        <StartButton aria-label="Start"><Svg s={32} st="none" c="#fff"><path d="M0 2l7-1v6.500H0zM8 1l8-1v7.500H8zM0 8.500h7V15l-7-1zM8 8.500h8V16l-8-1z" /></Svg></StartButton>
        <TaskSearch>
            <Svg s={32}><circle cx="10" cy="6" r="5" stroke="#333" strokeWidth="1.200" /><path d="M6.500 9.500L1 15" stroke="#333" strokeWidth="1.200" /></Svg>
            <input aria-label="Search" placeholder="Type here to search" />
        </TaskSearch>
        {taskIcons.map(([name, icon, open]) => (
            <TaskItem key={name} aria-label={name} $open={open} $on={name === 'Civil 3D'}><Svg s={48} vb="0 0 48 48">{icon}</Svg></TaskItem>
        ))}
        <Tray>
            <Svg s={42} vb="0 0 42 42" st="none"><path d="M8 28Q0 27 1 19q2-6 8-6Q12 2 22 3t12 11q7 1 7 8-1 6-7 6z" fill="#cfe8fb" /><path d="M13 28q-5 7-2 11 5 3 6-3zM28 28q-5 7-2 11 5 3 6-3z" fill="#2b8be6" /></Svg>
            <Weather>34°F  Rain and snow</Weather>
            <TrayIcons>
                <Svg s={32}><path d="M4 11l5-6 5 6" stroke="#fff" strokeWidth="1.300" /></Svg>
                <Svg s={32} st="none"><path d="M1 14q-2-5 3-6 1-5 6-4t4 6q3 3 0 4z" fill="#9b9b9b" /><path d="M3 3l11 11" stroke="#1b1b1b" strokeWidth="2" /><path d="M2 3l12 11" stroke="#ddd" /></Svg>
                <Svg s={32}><path d="M5 3h10v8H5zM10 11v3M6 14.500h8M1 2h4v5H1zM3 7v5" stroke="#fff" /></Svg>
                <Svg s={32}><path d="M1 6h3l3-4v12l-3-4H1zM9 5.500q2 2.500 0 5M11.500 3.500q3 4.500 0 9M14 2q4 6 0 12" stroke="#fff" /></Svg>
            </TrayIcons>
            <TrayText $w={44}>ENG<br />US</TrayText>
            <TrayText $w={152}>3:29 PM<br />2/14/2022</TrayText>
            <Svg s={46} vb="0 0 46 46" st="none"><path d="M8 4h26v24H20l-6 7v-7H8z" fill="#fff" /><path d="M12 10h18M12 16h18M12 22h12" stroke="#1b1b1b" strokeWidth="2" /><circle cx="32" cy="32" r="13" fill="#3b3b3b" stroke="#999" /><text x="32" y="39" textAnchor="middle" fontSize="19" fill="#fff">1</text></Svg>
        </Tray>
    </Taskbar>
);

const Arrow = () => <Svg s={36} h={36} vb="0 0 36 36"><path d="M1 20h32M22 9l11 11-11 11" stroke="#1681da" strokeWidth="3" /></Svg>;

const PlaybackError = () => (
    <Dialog role="dialog" aria-label="Action Macro - Playback Error">
        <DialogTitle><span>Action Macro - Playback Error</span><button aria-label="Close"><Cross c="#111" w={1.800} /></button></DialogTitle>
        <DialogHead>
            <Svg s={62} vb="0 0 62 62"><path d="M31 2L61 60H1z" fill="#fee200" stroke="#f0b428" strokeWidth="2" strokeLinejoin="round" /><path d="M31 22v22M31 49v5" stroke="#111" strokeWidth="4" /></Svg>
            <h2>An error occurred with the Test action macro during playback. What do you want to do?</h2>
        </DialogHead>
        <DialogBody>
            <Message>The command returned the error message:</Message>
            <Message>Command Failed: PN</Message>
            <Message>{'>>Enter point number:\n>>Enter point number: 1-3\nResuming LINE command.'}</Message>
            <Choice $focus>
                <span><Arrow /><span><b>Continue playback</b><small>Ignores the error and continues the playback. If you choose to continue, it is likely that you will get unexpected results.</small></span></span>
            </Choice>
            <Choice>
                <span><Arrow /><span><b>Stop playback</b><small>Retains all the changes made by the action macro up to this point. To revert to the state prior to the playback of the action macro, use Undo.</small></span></span>
            </Choice>
        </DialogBody>
    </Dialog>
);

const App = () => (
    <Page>
        <GlobalStyle />
        <RemoteBar>
            <TvLogo />
            <RemoteTab><span>Windows_10_CAD_Box</span><Svg s={26} h={30} vb="0 0 26 30"><path d="M2 4l22 24M24 4L2 28" stroke="#000" strokeWidth="5" /></Svg></RemoteTab>
            <RemoteAdd aria-label="New connection"><Svg s={30} vb="0 0 30 30"><path d="M15 0v30M0 15h30" stroke="#000" strokeWidth="6" /></Svg></RemoteAdd>
            <RemoteWin>
                <button aria-label="Minimize"><Min y={10} /></button>
                <button aria-label="Restore"><Restore s={20} /></button>
                <button aria-label="Close"><Cross c="#fff" w={2} /></button>
            </RemoteWin>
        </RemoteBar>
        <Shell>
            <Header />
            <RibbonBar />
            <DocTabs>
                <DocTab $w={238}>Start</DocTab>
                <DocTab $w={234}>Drawing1*<Cross s={18} w={3} c="#b4b8c0" /></DocTab>
                <DocTab $w={298} $on>Macro Investigation*<Cross s={18} w={3} c="#b4b8c0" /></DocTab>
                <NewDocTab aria-label="New drawing"><Svg s={18} vb="0 0 18 18"><path d="M9 1v16M1 9h16" stroke="#c3c6cc" strokeWidth="3" /></Svg></NewDocTab>
            </DocTabs>
            <Work>
                <ToolspacePanel />
                <SideTabs>
                    {['Prospector', 'Settings', 'Survey', 'Toolbox'].map((t, n) => <SideTab key={t} $on={n === 0}>{t}</SideTab>)}
                </SideTabs>
                <Drawing />
                <ToolStrips>
                    <Tools icons={stripIcons} />
                    <Tools icons={strip2Icons} />
                </ToolStrips>
                <SideTabs $right>
                    {['Design', 'Display', 'Extended Data', 'Object Class'].map((t, n) => <SideTab key={t} $right $on={n === 0}>{t}</SideTab>)}
                </SideTabs>
                <PropertiesPanel />
                <CommandLine />
            </Work>
            <StatusBar />
        </Shell>
        <WindowsTaskbar />
        <RemotePanel>
            <Svg s={43} h={54} vb="0 0 43 54" st="none"><path d="M0 0h43v54H0z" fill="#c9c9c9" /><path d="M9 2v50M21 2v50M33 2v50" stroke="#fff" strokeWidth="6" strokeDasharray="6 7" /></Svg>
            <button aria-label="Full screen"><Svg s={32}><path d="M6 6L1 1M1 5V1h4M10 6l5-5M11 1h4v4M6 10l-5 5M1 11v4h4M10 10l5 5M11 15h4v-4" stroke="#8a8a8a" strokeWidth="2" /></Svg></button>
            <button aria-label="Expand"><Svg s={44} h={26} vb="0 0 44 26"><path d="M3 4l19 18L41 4" stroke="#8a8a8a" strokeWidth="7" /></Svg></button>
        </RemotePanel>
        <Recorder>
            <Svg s={88} vb="0 0 88 88" st="#8f9094"><circle cx="44" cy="44" r="42" fill="#b5b6ba" stroke="#e6e6e8" strokeWidth="2" /><circle cx="44" cy="42" r="34" strokeWidth="2" /><circle cx="44" cy="40" r="26" strokeWidth="2" /><circle cx="44" cy="38" r="17" fill="#d98c92" stroke="#a8777c" strokeWidth="2" /><circle cx="44" cy="36" r="8" fill="#d3122a" stroke="none" /><path d="M38 48q6-5 12 0l-3 28h-6z" fill="#c40f26" stroke="none" /></Svg>
            <span>26</span>
        </Recorder>
        <RemoteDock aria-label="Remote session"><Svg s={47} h={96} vb="0 0 47 96" st="none"><path d="M12 0h35v96L0 62V12Q2 2 12 0z" fill="#6d7885" /><rect x="6" y="14" width="34" height="34" rx="3" fill="#35688f" /><circle cx="23" cy="31" r="13" fill="#aab4bf" /><path d="M10 31l7-5v3h12v-3l7 5-7 5v-3H17v3z" fill="#35688f" /></Svg></RemoteDock>
        <PlaybackError />
    </Page>
);

export default App;
